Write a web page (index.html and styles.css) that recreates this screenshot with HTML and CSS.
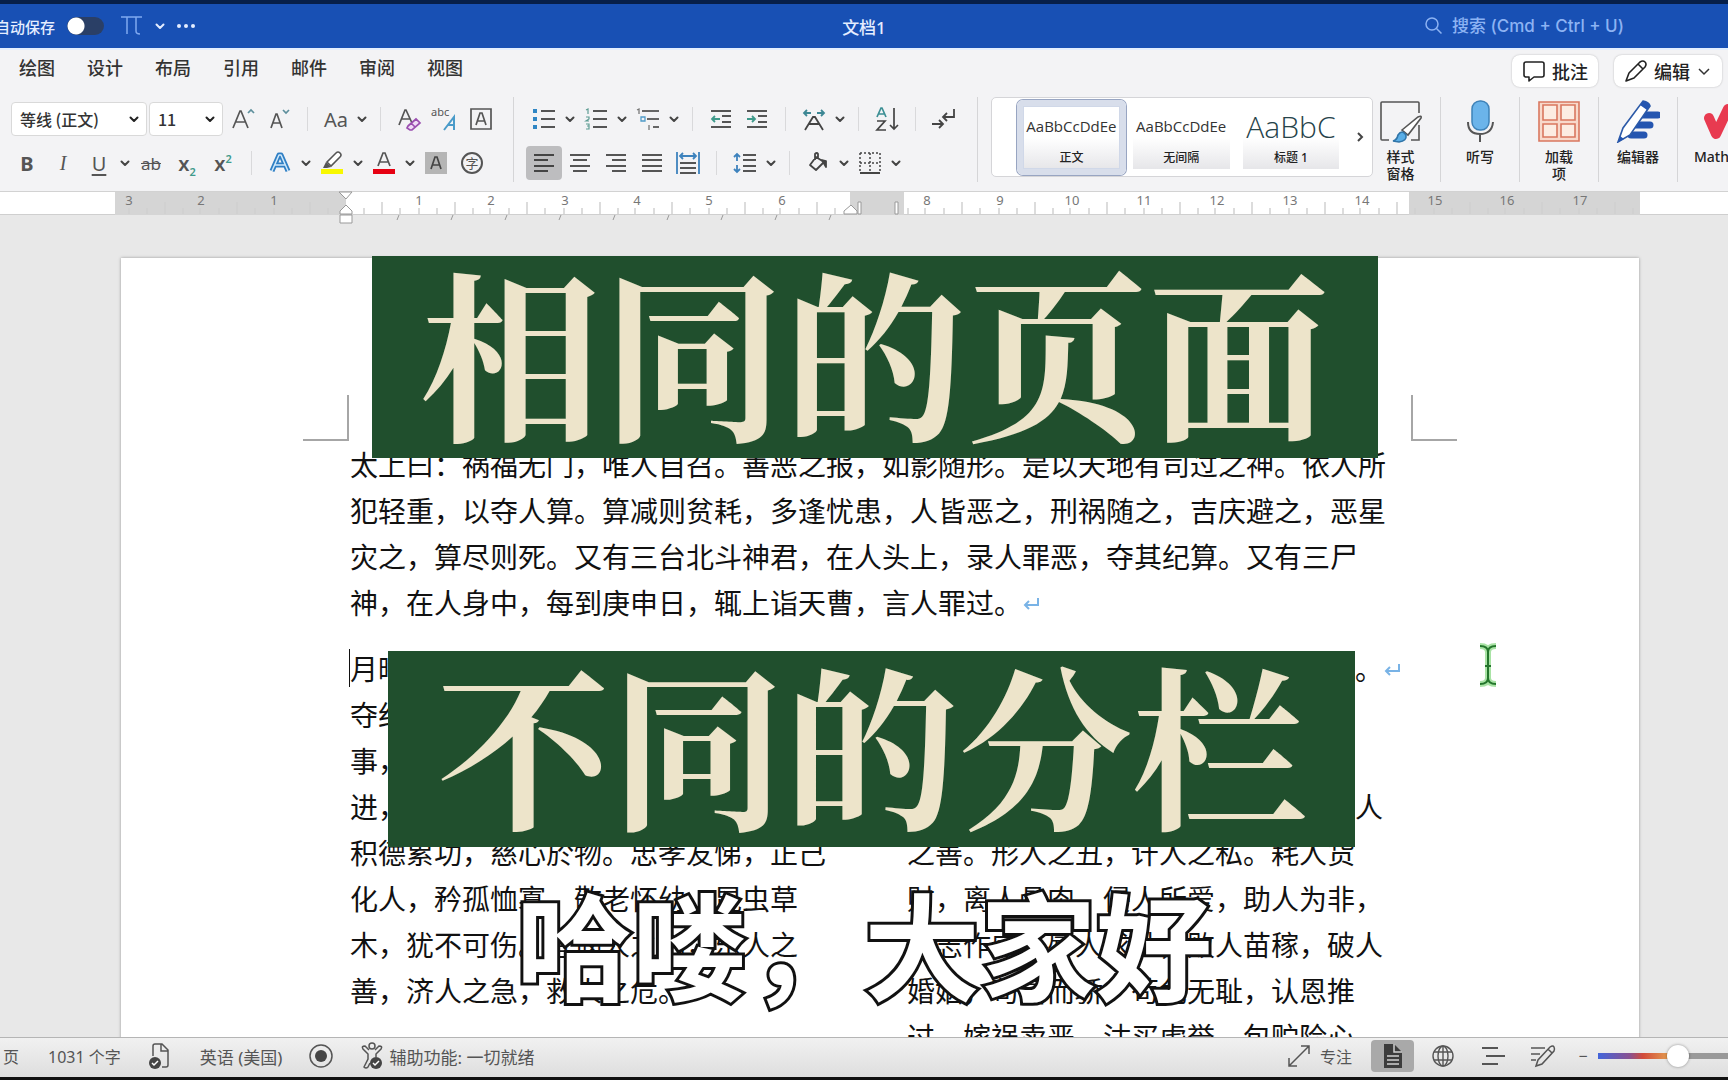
FILE: index.html
```html
<!DOCTYPE html>
<html lang="zh-CN">
<head>
  <meta charset="UTF-8" />
  <meta name="viewport" content="width=device-width, initial-scale=1.0" />
  <title>文档1</title>
  <link rel="stylesheet" href="styles.css">
</head>
<body>
  <!-- Shared icons -->
  <svg class="defs" aria-hidden="true">
    <symbol id="chev" viewBox="0 0 12 12"><path d="M2.5 4.5 6 8l3.500-3.500" fill="none" stroke="currentColor" stroke-width="2" stroke-linecap="round" stroke-linejoin="round"/></symbol>
    <symbol id="ret" viewBox="0 0 18 16"><path d="M16 2v7H3M7 5 3 9l4 4" fill="none" stroke="currentColor" stroke-width="2"/></symbol>
  </svg>

  <!-- Title bar -->
  <header class="titlebar">
    <div class="quick">
      <label class="autosave"><span>自动保存</span><input type="checkbox" class="switch"></label>
      <button class="t-btn" aria-label="公式">
        <svg width="24" height="22" viewBox="0 0 24 22" fill="none" stroke="#7fa9f0" stroke-width="1.500"><path d="M1 2h21M7 2v17M16 2v14q0 3 4 3"/></svg>
      </button>
      <button class="t-btn chevron" aria-label="更多公式"><svg width="12" height="12"><use href="#chev"/></svg></button>
      <button class="t-btn" aria-label="更多"><svg width="20" height="6" fill="#e4edff"><circle cx="3" cy="3" r="2"/><circle cx="10" cy="3" r="2"/><circle cx="17" cy="3" r="2"/></svg></button>
    </div>
    <h1>文档1</h1>
    <div class="search">
      <svg width="20" height="20" viewBox="0 0 20 20" fill="none" stroke="#8db3f3" stroke-width="1.500"><circle cx="8" cy="8" r="6"/><path d="m12.500 12.500 5 5"/></svg>
      <input type="text" aria-label="搜索" placeholder="搜索 (Cmd + Ctrl + U)">
    </div>
  </header>

  <!-- Ribbon -->
  <section class="ribbon">
    <div class="tabs">
      <nav>
        <a href="#">绘图</a><a href="#">设计</a><a href="#">布局</a><a href="#">引用</a><a href="#">邮件</a><a href="#">审阅</a><a href="#">视图</a>
      </nav>
      <div class="actions">
        <button class="pill">
          <svg width="24" height="22" viewBox="0 0 24 22" fill="none" stroke="#222" stroke-width="1.600" stroke-linejoin="round"><path d="M4 2h16q2 0 2 2v11q0 2-2 2h-8l-5 4v-4H4q-2 0-2-2V4q0-2 2-2z"/></svg>
          批注
        </button>
        <button class="pill">
          <svg width="24" height="24" viewBox="0 0 24 24" fill="none" stroke="#222" stroke-width="1.600" stroke-linejoin="round"><path d="m2 22 3-8L16 3q3-2 5 0t0 5L10 19zM14 5l5 5"/></svg>
          编辑
          <svg width="16" height="16" viewBox="0 0 16 16" fill="none" stroke="#333" stroke-width="1.500"><path d="m3 6 5 5 5-5"/></svg>
        </button>
      </div>
    </div>

    <div class="tools">
      <div class="group font-group">
        <div class="row">
          <div class="picker font-name">
            <select aria-label="字体"><option>等线 (正文)</option></select>
            <svg width="12" height="12"><use href="#chev"/></svg>
          </div>
          <div class="picker font-size">
            <select aria-label="字号"><option>11</option></select>
            <svg width="12" height="12"><use href="#chev"/></svg>
          </div>
          <button class="tool" aria-label="增大字号"><svg width="24" height="24" viewBox="0 0 24 24" fill="none" stroke="#555" stroke-width="1.700"><path d="m2 21 7-17h1l7 17M5 15h9"/><path d="m17 6 3-3 3 3" stroke="#5d8f9c"/></svg></button>
          <button class="tool" aria-label="减小字号"><svg width="24" height="24" viewBox="0 0 24 24" fill="none" stroke="#555" stroke-width="1.700"><path d="M4 21 9 7h1l5 14M6 16h7"/><path d="m16 3 3 3 3-3" stroke="#5d8f9c"/></svg></button>
          <span class="sep"></span>
          <button class="tool case">Aa</button>
          <button class="chevron" aria-label="大小写选项"><svg width="12" height="12"><use href="#chev"/></svg></button>
          <span class="sep"></span>
          <button class="tool" aria-label="清除格式"><svg width="26" height="26" viewBox="0 0 26 26" fill="none" stroke="#555" stroke-width="1.700"><path d="M3 19 9 4h1l6 13M6 13h8"/><path d="m12 20 8-7 4 4-8 7h-2l-3-2zM15 17l4 4" fill="#f0dcf6" stroke="#9b4fb0"/></svg></button>
          <button class="tool" aria-label="拼音指南"><svg width="28" height="28" viewBox="0 0 28 28"><text x="0" y="11" font-size="11" fill="#555">abc</text><path d="m13 25 10-13v13M17 20h6" fill="none" stroke="#4a9bc9" stroke-width="2"/></svg></button>
          <button class="tool" aria-label="字符边框"><svg width="24" height="24" viewBox="0 0 24 24" fill="none" stroke="#555" stroke-width="1.700"><path d="M2 2h20v20H2zM7 18l4-12h2l4 12M8 14h8"/></svg></button>
        </div>
        <div class="row second">
          <button class="tool bold">B</button>
          <button class="tool italic">I</button>
          <button class="tool underline">U</button>
          <button class="chevron" aria-label="下划线样式"><svg width="12" height="12"><use href="#chev"/></svg></button>
          <button class="tool strike">ab</button>
          <button class="tool script"><span>x<sub>2</sub></span></button>
          <button class="tool script"><span>x<sup>2</sup></span></button>
          <span class="sep"></span>
          <button class="tool" aria-label="文本效果"><svg width="24" height="24" viewBox="0 0 24 24" fill="none" stroke-linejoin="round"><path d="m4 20 7-16h2l7 16M7 14h10" stroke="#2f7fc4" stroke-width="5"/><path d="m4 20 7-16h2l7 16M7 14h10" stroke="#cfe8fa" stroke-width="1.500"/></svg></button>
          <button class="chevron" aria-label="文本效果选项"><svg width="12" height="12"><use href="#chev"/></svg></button>
          <button class="tool" aria-label="突出显示"><svg width="26" height="26" viewBox="0 0 26 26"><path d="m8 12 9-9q2-2 4 0t0 4l-9 9z" fill="#fff" stroke="#555" stroke-width="1.600"/><path d="m7 12 5 5-4 1-4 0z" fill="#555"/><path d="M2 19h22v5H2z" fill="#f8f800"/></svg></button>
          <button class="chevron" aria-label="突出显示颜色"><svg width="12" height="12"><use href="#chev"/></svg></button>
          <button class="tool" aria-label="字体颜色"><svg width="26" height="26" viewBox="0 0 26 26"><path d="m7 16 5-13h2l5 13M9 12h8" fill="none" stroke="#555" stroke-width="1.700"/><path d="M2 19h22v5H2z" fill="#e60012"/></svg></button>
          <button class="chevron" aria-label="字体颜色选项"><svg width="12" height="12"><use href="#chev"/></svg></button>
          <button class="tool" aria-label="字符底纹"><svg width="24" height="24" viewBox="0 0 24 24"><path d="M1 1h22v22H1z" fill="#b5b5b5"/><path d="m7 18 4-12h2l4 12M8 14h8" fill="none" stroke="#444" stroke-width="1.700"/></svg></button>
          <button class="tool"><span class="ring">字</span></button>
        </div>
      </div>

      <div class="group para-group">
        <div class="row">
          <button class="tool" aria-label="项目符号"><svg width="24" height="24" viewBox="0 0 24 24"><path d="M9 4h14M9 12h14M9 20h14" stroke="#555" stroke-width="1.800"/><path d="M1 2h4v4H1zM1 10h4v4H1zM1 18h4v4H1z" fill="#2f86c4"/></svg></button>
          <button class="chevron" aria-label="项目符号选项"><svg width="12" height="12"><use href="#chev"/></svg></button>
          <button class="tool" aria-label="编号"><svg width="24" height="24" viewBox="0 0 24 24"><path d="M9 4h14M9 12h14M9 20h14" stroke="#555" stroke-width="1.800"/><path d="m2 3 2-1v5M2 10h3v2l-3 2h3M2 17h3v5H2M3 19h2" fill="none" stroke="#5f9d94" stroke-width="1.200"/></svg></button>
          <button class="chevron" aria-label="编号选项"><svg width="12" height="12"><use href="#chev"/></svg></button>
          <button class="tool" aria-label="多级列表"><svg width="24" height="24" viewBox="0 0 24 24"><path d="M6 4h17M11 12h12M17 20h6" stroke="#666" stroke-width="1.800"/><path d="m1 3 2-1v5M13 18v5" fill="none" stroke="#777" stroke-width="1.300"/><path d="M5 10h4v4H5z" fill="none" stroke="#4f9bc8" stroke-width="1.300"/></svg></button>
          <button class="chevron" aria-label="多级列表选项"><svg width="12" height="12"><use href="#chev"/></svg></button>
          <span class="sep"></span>
          <button class="tool" aria-label="减少缩进"><svg width="24" height="24" viewBox="0 0 24 24" fill="none" stroke="#555" stroke-width="1.800"><path d="M2 4h20M13 9h9M13 15h9M2 20h20"/><path d="M11 12H3M6 9l-3 3 3 3" stroke="#3f9a8b"/></svg></button>
          <button class="tool" aria-label="增加缩进"><svg width="24" height="24" viewBox="0 0 24 24" fill="none" stroke="#555" stroke-width="1.800"><path d="M2 4h20M13 9h9M13 15h9M2 20h20"/><path d="M2 12h8M7 9l3 3-3 3" stroke="#3f9a8b"/></svg></button>
          <span class="sep"></span>
          <button class="tool" aria-label="中文版式"><svg width="26" height="26" viewBox="0 0 26 26" fill="none" stroke="#444" stroke-width="1.800"><path d="m4 24 8-13h2l8 13M8 18h10"/><path d="M10 7H3M6 4 3 7l3 3M16 7h7M20 4l3 3-3 3" stroke="#3c8794"/></svg></button>
          <button class="chevron" aria-label="中文版式选项"><svg width="12" height="12"><use href="#chev"/></svg></button>
          <span class="sep"></span>
          <button class="tool" aria-label="排序"><svg width="26" height="26" viewBox="0 0 26 26" fill="none" stroke="#444" stroke-width="1.700"><path d="m3 11 4-9h1l4 9M4 8h7" stroke="#3c8f94"/><path d="M3 15h8l-8 9h9M20 2v21M16 19l4 4 4-4"/></svg></button>
          <span class="sep"></span>
          <button class="tool" aria-label="显示编辑标记"><svg width="26" height="26" viewBox="0 0 26 26" fill="none" stroke="#444" stroke-width="1.800"><path d="M23 3v8H13M16 7l-4 4 4 4M1 18h11M8 14l4 4-4 4"/></svg></button>
        </div>
        <div class="row second">
          <button class="tool active" aria-label="左对齐"><svg width="24" height="24" viewBox="0 0 24 24" stroke="#444" stroke-width="1.800"><path d="M2 4h20M2 9h14M2 15h20M2 20h14"/></svg></button>
          <button class="tool" aria-label="居中"><svg width="24" height="24" viewBox="0 0 24 24" stroke="#555" stroke-width="1.800"><path d="M2 4h20M5 9h14M2 15h20M5 20h14"/></svg></button>
          <button class="tool" aria-label="右对齐"><svg width="24" height="24" viewBox="0 0 24 24" stroke="#555" stroke-width="1.800"><path d="M2 4h20M8 9h14M2 15h20M8 20h14"/></svg></button>
          <button class="tool" aria-label="两端对齐"><svg width="24" height="24" viewBox="0 0 24 24" stroke="#555" stroke-width="1.800"><path d="M2 4h20M2 9h20M2 15h20M2 20h20"/></svg></button>
          <button class="tool" aria-label="分散对齐"><svg width="24" height="24" viewBox="0 0 24 24" fill="none" stroke="#555" stroke-width="1.800"><path d="M4 12h16M4 17h16M4 22h16"/><path d="M1 1v22M23 1v22M4 5h16M7 2 4 5l3 3M17 2l3 3-3 3" stroke="#3d82bd"/></svg></button>
          <span class="sep"></span>
          <button class="tool" aria-label="行距"><svg width="24" height="24" viewBox="0 0 24 24" fill="none" stroke="#555" stroke-width="1.800"><path d="M10 4h13M10 9h13M10 15h13M10 20h13"/><path d="M4 10V3M1 6l3-3 3 3M4 14v7M1 18l3 3 3-3" stroke="#3d82bd"/></svg></button>
          <button class="chevron" aria-label="行距选项"><svg width="12" height="12"><use href="#chev"/></svg></button>
          <span class="sep"></span>
          <button class="tool" aria-label="底纹"><svg width="24" height="24" viewBox="0 0 24 24" fill="none" stroke="#444" stroke-width="1.800" stroke-linejoin="round"><path d="m10 6-6 8 6 5 8-8zM9 9V3q2-2 3 0v5"/><path d="m16 9 4 1v6z" fill="#444"/></svg></button>
          <button class="chevron" aria-label="底纹选项"><svg width="12" height="12"><use href="#chev"/></svg></button>
          <button class="tool" aria-label="边框"><svg width="24" height="24" viewBox="0 0 24 24" fill="none" stroke="#444" stroke-width="1.500"><path d="M2 2h20v20M2 2v20M12 2v20M2 12h20" stroke-dasharray="2 2"/><path d="M2 22h20" stroke-width="2"/></svg></button>
          <button class="chevron" aria-label="边框选项"><svg width="12" height="12"><use href="#chev"/></svg></button>
        </div>
      </div>

      <div class="styles">
        <button class="style selected"><span class="sample">AaBbCcDdEe</span><span class="name">正文</span></button>
        <button class="style"><span class="sample">AaBbCcDdEe</span><span class="name">无间隔</span></button>
        <button class="style"><span class="sample large">AaBbC</span><span class="name">标题 1</span></button>
        <button class="more" aria-label="更多样式"><svg width="12" height="12" viewBox="0 0 12 12" fill="none" stroke="#444" stroke-width="2"><path d="m4 2 4 4-4 4"/></svg></button>
      </div>

      <button class="big pane">
        <svg width="44" height="44" viewBox="0 0 44 44" fill="none" stroke="#555" stroke-width="1.600"><path d="M10 41H3q-1 0-1-1V4q0-1 1-1h36q1 0 1 1v10M40 26v15h-8"/><path d="m23 31 16-13q4-2 3 1L29 36z" fill="#fff"/><path d="M14 42q4-1 5-6 4-6 8 0 1 6-7 7z" fill="#5aaee6" stroke="#3175a8"/></svg>
        样式<br>窗格
      </button>
      <button class="big">
        <svg width="44" height="44" viewBox="0 0 44 44" fill="none" stroke="#555" stroke-width="2"><rect x="14" y="2" width="17" height="29" rx="8" fill="#6bb4ea" stroke="#3e82b8" stroke-width="1.500"/><path d="M10 23q0 12 12 12t13-12M22 35v8"/></svg>
        听写
      </button>
      <button class="big">
        <svg width="44" height="44" viewBox="0 0 44 44" fill="#fcece2" stroke="#d9775f" stroke-width="1.600"><path d="M2 3h40v39H2z" fill="#f8d9cb"/><path d="M6 6h14v15H6zM24 6h14v15H24zM6 25h14v13H6zM24 25h14v13H24z"/></svg>
        加载<br>项
      </button>
      <button class="big">
        <svg width="44" height="44" viewBox="0 0 44 44"><path d="M25 16h17M20 26h14M15 36h13" stroke="#2455b0" stroke-width="7" stroke-linecap="round"/><path d="M27 2q6 1 7 5L14 36 2 43 7 29z" fill="#fff" stroke="#2c5aa8" stroke-width="1.600"/><path d="M27 2q6 1 7 5l-3 4-7-5zM2 43l2-6 4 3z" fill="#2455b0"/></svg>
        编辑器
      </button>
      <button class="big math">
        <svg width="44" height="44" viewBox="0 0 44 44" fill="none" stroke="#e83a50" stroke-width="10" stroke-linecap="round" stroke-linejoin="round"><path d="m15 19 7 16L34 10"/></svg>
        MathType
      </button>
    </div>
  </section>

  <!-- Ruler -->
  <div class="ruler">
    <svg width="100%" height="23">
      <defs>
        <pattern id="ticks" x="231" y="0" width="145" height="23" patternUnits="userSpaceOnUse">
          <path d="M18 16v6M36 10v12M54 16v6M73 16v6M91 16v6M109 10v12M127 16v6M144 16v6" stroke="#b9b9b9"/>
        </pattern>
        <pattern id="marks" x="231" y="23" width="54" height="6" patternUnits="userSpaceOnUse">
          <path d="m53 0-2 5" stroke="#999"/>
        </pattern>
      </defs>
      <rect width="231" height="23" fill="#d5d5d5"/>
      <rect x="735" width="54" height="23" fill="#d5d5d5"/>
      <rect x="1294" width="231" height="23" fill="#d5d5d5"/>
      <rect x="231" width="504" height="23" fill="url(#ticks)"/>
      <rect x="789" width="505" height="23" fill="url(#ticks)"/>
      <rect width="231" height="23" fill="url(#ticks)" opacity=".3"/>
      <rect x="1294" width="231" height="23" fill="url(#ticks)" opacity=".3"/>
      <rect x="231" y="23" width="504" height="6" fill="url(#marks)"/>
      <g class="nums">
        <text x="14" y="13">3</text><text x="86" y="13">2</text><text x="159" y="13">1</text>
        <text x="304" y="13">1</text><text x="376" y="13">2</text><text x="450" y="13">3</text><text x="522" y="13">4</text><text x="594" y="13">5</text><text x="667" y="13">6</text>
        <text x="812" y="13">8</text><text x="885" y="13">9</text><text x="957" y="13">10</text><text x="1029" y="13">11</text><text x="1102" y="13">12</text><text x="1175" y="13">13</text><text x="1247" y="13">14</text><text x="1320" y="13">15</text><text x="1392" y="13">16</text><text x="1465" y="13">17</text>
      </g>
      <g fill="#fff" stroke="#999">
        <path d="M224 0h13l-6 7zM231 13l6 6v3h-12v-3zM225 23h12v8h-12z"/>
        <path d="m736 13 6 6v3h-13v-3zM743 10h3v12h-3zM780 10h3v12h-3z"/>
      </g>
    </svg>
  </div>

  <!-- Document -->
  <main class="canvas">
    <article class="page">
      <div class="corners"><span class="corner left"></span><span class="corner right"></span></div>
      <p class="intro">太上曰：祸福无门，唯人自召。善恶之报，如影随形。是以天地有司过之神。依人所<br>犯轻重，以夺人算。算减则贫耗，多逢忧患，人皆恶之，刑祸随之，吉庆避之，恶星<br>灾之，算尽则死。又有三台北斗神君，在人头上，录人罪恶，夺其纪算。又有三尸<br>神，在人身中，每到庚申日，辄上诣天曹，言人罪过。<svg class="ret" width="18" height="16"><use href="#ret"/></svg></p>
      <div class="columns">
        <p>月晦之日，灶神亦然。凡人有过，大则<br>夺纪，小则夺算。其过大小，有数百<br>事，欲求长生者，先须避之。是道则<br>进，非道则退。不履邪径，不欺暗室。<br>积德累功，慈心於物。忠孝友悌，正己<br>化人，矜孤恤寡，敬老怀幼，昆虫草<br>木，犹不可伤。宜悯人之凶，乐人之<br>善，济人之急，救人之危。</p>
        <p>人之得失如己得失，不彰人短炫己长。<svg class="ret" width="18" height="16"><use href="#ret"/></svg><br>非义而动，背理而行。以恶为能，忍<br>作残害。阴贼良善，暗侮君亲。慢其<br>先生，叛其所事。虚诬诈伪，攻讦蔽人<br>之善。形人之丑，讦人之私。耗人货<br>财，离人骨肉，侵人所爱，助人为非，<br>逞志作威，辱人求胜，败人苗稼，破人<br>婚姻，苟富而骄，苟免无耻，认恩推<br>过，嫁祸卖恶，沽买虚誉，包贮险心</p>
      </div>
    </article>

    <!-- Overlays -->
    <div class="banner first">相同的页面</div>
    <div class="banner last">不同的分栏</div>
    <div class="caption">哈喽，大家好</div>
    <svg class="pointer" width="20" height="44" viewBox="0 0 20 44" fill="none"><path d="M2 3q8 0 8 6v26q0 6-8 6M18 3q-8 0-8 6M18 41q-8 0-8-6M7 23h6" stroke="#a9e3a5" stroke-width="6"/><path d="M2 3q8 0 8 6v26q0 6-8 6M18 3q-8 0-8 6M18 41q-8 0-8-6M7 23h6" stroke="#24762c" stroke-width="2"/></svg>
  </main>

  <!-- Status bar -->
  <footer class="status">
    <span class="pages">页</span>
    <span class="words">1031 个字</span>
    <button class="proof" aria-label="校对"><svg width="24" height="28" viewBox="0 0 24 28" fill="none" stroke="#555" stroke-width="1.500"><path d="M6 14V4q0-2 2-2h7l6 6v15q0 2-2 2h-4M14 2v7h7"/><circle cx="8" cy="21" r="6" fill="#444" stroke="none"/><path d="m5 21 2 2 4-4" stroke="#fff"/></svg></button>
    <button class="lang">英语 (美国)</button>
    <button class="record" aria-label="录制宏"><svg width="24" height="26" viewBox="0 0 24 26"><circle cx="12" cy="13" r="11" fill="none" stroke="#555" stroke-width="1.500"/><circle cx="12" cy="13" r="6" fill="#444"/></svg></button>
    <button class="access">
      <svg width="22" height="28" viewBox="0 0 22 28" fill="none" stroke="#555" stroke-width="1.500"><circle cx="11" cy="4" r="3"/><path d="M8 8 4 4Q0 4 2 7l5 5v5l-4 8q2 2 4 0l2-4M14 8l4-4q4 0 2 3l-5 5v3"/><circle cx="15" cy="21" r="6" fill="#444" stroke="none"/><path d="m12 21 2 2 4-4" stroke="#fff"/></svg>
      辅助功能: 一切就绪
    </button>
    <div class="views">
      <button class="focus"><svg width="26" height="24" viewBox="0 0 26 24" fill="none" stroke="#555" stroke-width="1.500"><path d="M3 22 23 2M15 2h8v8M3 14v8h8"/></svg>专注</button>
      <button class="view active" aria-label="页面视图"><svg width="20" height="24" viewBox="0 0 20 24"><path d="M1 0h10l8 8v16H1z" fill="#3c3c3c"/><path d="M11 0v8h8M4 12h12M4 16h12M4 20h12" fill="none" stroke="#d0d0d0" stroke-width="1.500"/></svg></button>
      <button class="view" aria-label="Web 版式"><svg width="24" height="24" viewBox="0 0 24 24" fill="none" stroke="#555" stroke-width="1.400"><circle cx="12" cy="12" r="10"/><ellipse cx="12" cy="12" rx="5" ry="10"/><path d="M3 8h18M3 16h18M12 2v20"/></svg></button>
      <button class="view" aria-label="大纲"><svg width="24" height="20" viewBox="0 0 24 20" stroke="#555" stroke-width="1.800"><path d="M1 2h16M5 10h19M1 18h16"/></svg></button>
      <button class="view" aria-label="草稿"><svg width="26" height="24" viewBox="0 0 26 24" fill="none" stroke="#555" stroke-width="1.500"><path d="M1 4h14M1 10h9M1 16h5M6 22l2-6L20 3q3-2 4 0t0 4L12 20zM18 5l4 4"/></svg></button>
      <button class="zoom-out" aria-label="缩小">−</button>
      <input class="zoom" type="range" aria-label="缩放" min="0" max="100" value="50">
    </div>
  </footer>
</body>
</html>
```
FILE: styles.css
```css
* {
  box-sizing: border-box;
}

body {
  margin: 0;
  height: 100vh;
  display: flex;
  flex-direction: column;
  overflow: hidden;
  font-family: "Noto Sans", "Noto Sans CJK SC", sans-serif;
  color: #222;
  background: #e8e8e8;
  border-top: 4px solid #071f49;
  border-bottom: 3px solid #111;
}

button {
  display: flex;
  align-items: center;
  justify-content: center;
  padding: 0;
  border: none;
  background: none;
  font-family: inherit;
  color: inherit;
  white-space: nowrap;
}

svg {
  flex: none;
}

.defs {
  position: absolute;
  width: 0;
  height: 0;
}

/* Title bar */
.titlebar {
  flex: none;
  display: grid;
  grid-template-columns: 1fr auto 1fr;
  align-items: center;
  height: 44px;
  background: #1850b4;
  color: #e4edff;
}

.titlebar h1 {
  margin: 0;
  font-size: 17px;
  font-weight: 500;
}

.quick {
  display: flex;
  align-items: center;
  gap: 8px;
}

.autosave {
  display: flex;
  align-items: center;
  gap: 12px;
  margin-left: -5px;
  margin-right: 8px;
  font-size: 15px;
  font-weight: 500;
}

.switch {
  appearance: none;
  margin: 0;
  width: 37px;
  height: 18px;
  border-radius: 9px;
  background: radial-gradient(circle at 9px 9px, #fff 8px, #2a3f66 9px);
}

.search {
  display: flex;
  align-items: center;
  justify-self: end;
  gap: 8px;
  padding-right: 84px;
}

.search input {
  width: 192px;
  padding: 0;
  border: none;
  background: none;
  font: 500 17px "Inter", "Noto Sans CJK SC", sans-serif;
}

.search input::placeholder {
  color: #8db3f3;
}

/* Ribbon */
.ribbon {
  flex: none;
  background: #f3f3f5;
  border-top: 2px solid #e3efff;
  border-bottom: 1px solid #d2d2d2;
}

.tabs {
  display: flex;
  justify-content: space-between;
  padding: 5px 6px 0 19px;
}

.tabs nav {
  display: flex;
  gap: 32px;
}

.tabs a {
  font-size: 18px;
  line-height: 26px;
  font-weight: 500;
  color: #333;
  text-decoration: none;
}

.actions {
  display: flex;
  gap: 16px;
}

.pill {
  height: 32px;
  gap: 6px;
  padding: 0 10px;
  border-radius: 8px;
  background: #fff;
  box-shadow: 0 0 2px rgba(0, 0, 0, 0.25);
  font-size: 18px;
  font-weight: 500;
}

.tools {
  display: flex;
  height: 104px;
  padding-top: 10px;
  overflow: hidden;
}

.group {
  flex: none;
  height: 85px;
  border-right: 1px solid #d5d5d7;
}

.font-group {
  width: 514px;
  padding-left: 9px;
}

.para-group {
  width: 464px;
  padding-left: 12px;
}

.row {
  display: flex;
  align-items: center;
  height: 44px;
}

.tool {
  flex: none;
  width: 36px;
  height: 34px;
  font-size: 20px;
  color: #555;
}

.tool.active {
  background: #bdbdbf;
  border-radius: 4px;
}

.chevron {
  flex: none;
  width: 16px;
  height: 30px;
  color: #444;
}

.titlebar .chevron {
  color: #e4edff;
}

.sep {
  flex: none;
  width: 1px;
  height: 24px;
  margin: 0 10px;
  background: #d9d9db;
}

.picker {
  display: flex;
  align-items: center;
  height: 34px;
  margin-left: 2px;
  padding: 0 6px 0 8px;
  border: 1px solid #d9d9d9;
  border-radius: 4px;
  background: #fff;
}

.picker select {
  appearance: none;
  flex: 1;
  min-width: 0;
  padding: 0;
  border: none;
  background: none;
  font: 500 16px "Noto Sans CJK SC", sans-serif;
  color: #333;
}

.font-name {
  width: 136px;
}

.font-size {
  width: 74px;
}

.font-size + .tool {
  margin-left: 2px;
}

.bold {
  font-weight: 700;
}

.italic {
  font-family: "Liberation Serif", serif;
  font-style: italic;
}

.underline {
  text-decoration: underline;
  text-underline-offset: 3px;
}

.strike {
  font-size: 17px;
  text-decoration: line-through;
}

.script {
  font-weight: 600;
}

.script sub,
.script sup {
  font-size: 11px;
  line-height: 0;
  color: #3f9a8b;
}

.ring {
  width: 22px;
  height: 22px;
  border: 2px solid #555;
  border-radius: 50%;
  font-size: 13px;
  line-height: 18px;
}

/* Style gallery */
.styles {
  flex: none;
  display: flex;
  align-items: center;
  gap: 1px;
  width: 382px;
  height: 80px;
  margin-left: 13px;
  padding-left: 25px;
  border: 1px solid #d5d5d8;
  border-radius: 5px;
  background: #fff;
}

.style {
  flex-direction: column;
  justify-content: flex-end;
  width: 110px;
  height: 75px;
  padding: 0;
  border: 6px solid transparent;
  border-radius: 6px;
  background: linear-gradient(#fff 50%, #e6e6e9) padding-box;
}

.style.selected {
  border-color: #d8deeb;
  box-shadow: inset 0 0 0 1px #d0d8e8, 0 0 0 1px #98a5c2;
}

.sample {
  flex: 1;
  display: flex;
  align-items: center;
  font: 15px "Open Sans", sans-serif;
  color: #333;
}

.sample.large {
  font-size: 30px;
  font-weight: 300;
  color: #26434a;
}

.name {
  font-size: 12px;
  line-height: 22px;
  font-weight: 500;
}

.more {
  width: 24px;
  height: 40px;
  margin-left: 2px;
}

/* Large ribbon buttons */
.big {
  flex: none;
  flex-direction: column;
  justify-content: flex-start;
  width: 79px;
  height: 85px;
  border-right: 1px solid #d5d5d7;
  font-size: 14px;
  line-height: 17px;
  font-weight: 500;
}

.big svg {
  margin: 2px 0 5px;
}

.big.pane {
  width: 68px;
  padding-right: 12px;
}

.big.math {
  align-items: flex-start;
  padding-left: 16px;
  border: none;
}

/* Ruler */
.ruler {
  flex: none;
  height: 23px;
  padding: 0 88px 0 115px;
  background: #fff;
  border-bottom: 1px solid #cfcfcf;
  position: relative;
  z-index: 1;
}

.ruler svg {
  display: block;
  overflow: visible;
}

.nums {
  font: 13px "Noto Sans", sans-serif;
  fill: #777;
  text-anchor: middle;
}

/* Document */
.canvas {
  flex: 1;
  min-height: 0;
  position: relative;
  overflow: hidden;
  padding: 43px 89px 0 121px;
  background: #e8e8e8;
}

.page {
  min-height: 100%;
  background: #fff;
  box-shadow: 0 0 3px rgba(0, 0, 0, 0.35);
}

.corners {
  display: flex;
  justify-content: space-between;
  padding: 137px 182px 0;
}

.corner {
  width: 46px;
  height: 46px;
  border-bottom: 2px solid #a6a6a6;
}

.corner.left {
  border-right: 2px solid #a6a6a6;
}

.corner.right {
  border-left: 2px solid #a6a6a6;
}

.page p {
  margin: 0;
  font: 28px/46px "Noto Sans CJK SC", sans-serif;
  color: #111;
  white-space: nowrap;
}

.page .intro,
.columns {
  margin: 0 227px 0 229px;
}

.columns {
  display: grid;
  grid-template-columns: 1fr 1fr;
  gap: 52px;
  margin-top: 20px;
  position: relative;
}

.columns::before {
  content: "";
  position: absolute;
  left: -1px;
  top: 4px;
  width: 1px;
  height: 38px;
  background: #111;
}

.ret {
  vertical-align: 2px;
  color: #79b3e6;
}

/* Overlays */
.banner {
  position: absolute;
  padding-bottom: 16px;
  background: #204f2d;
  color: #ede4ca;
  font-family: "Noto Serif CJK SC", "Noto Sans CJK SC", serif;
  font-weight: 700;
  white-space: nowrap;
  text-align: center;
}

.banner.first {
  top: 41px;
  left: 372px;
  right: 350px;
  font-size: 182px;
  line-height: 186px;
}

.banner.last {
  top: 436px;
  left: 388px;
  right: 373px;
  font-size: 174px;
  line-height: 180px;
}

.caption {
  position: absolute;
  left: 0;
  right: 0;
  top: 668px;
  text-align: center;
  font: 700 116px/116px "Noto Sans CJK SC", sans-serif;
  color: #fff;
  -webkit-text-stroke: 6px #111;
  paint-order: stroke fill;
  white-space: nowrap;
}

.pointer {
  position: absolute;
  top: 428px;
  right: 230px;
}

/* Status bar */
.status {
  flex: none;
  display: flex;
  align-items: center;
  height: 40px;
  padding: 0 0 3px 3px;
  overflow: hidden;
  border-top: 1px solid #b5b5b5;
  background: linear-gradient(#f1f1f1, #dedede);
  font-size: 16px;
  color: #555;
}

.status button {
  font-size: 16px;
}

.words {
  margin-left: 29px;
}

.proof {
  margin-left: 26px;
}

.status .lang,
.status .access {
  font-size: 17px;
}

.lang {
  margin-left: 29px;
}

.record {
  margin-left: 27px;
}

.access {
  gap: 6px;
  margin-left: 28px;
}

.views {
  display: flex;
  align-items: center;
  margin-left: auto;
}

.focus {
  gap: 8px;
  margin-right: 19px;
}

.view {
  width: 50px;
  height: 32px;
}

.view.active {
  width: 43px;
  margin-right: 4px;
  border-radius: 4px;
  background: #a9a9a9;
}

.zoom-out {
  width: 30px;
}

.zoom {
  appearance: none;
  width: 160px;
  height: 22px;
  margin: 0 -30px 0 0;
  background: linear-gradient(90deg, #4265db, #8a5190 20%, #d24b3a 28%, #eaba58 50%, #999 50%) center / 100% 6px no-repeat;
}

.zoom::-webkit-slider-thumb {
  appearance: none;
  width: 22px;
  height: 22px;
  border-radius: 50%;
  background: #fff;
  box-shadow: 0 0 3px rgba(0, 0, 0, 0.4);
}
```
